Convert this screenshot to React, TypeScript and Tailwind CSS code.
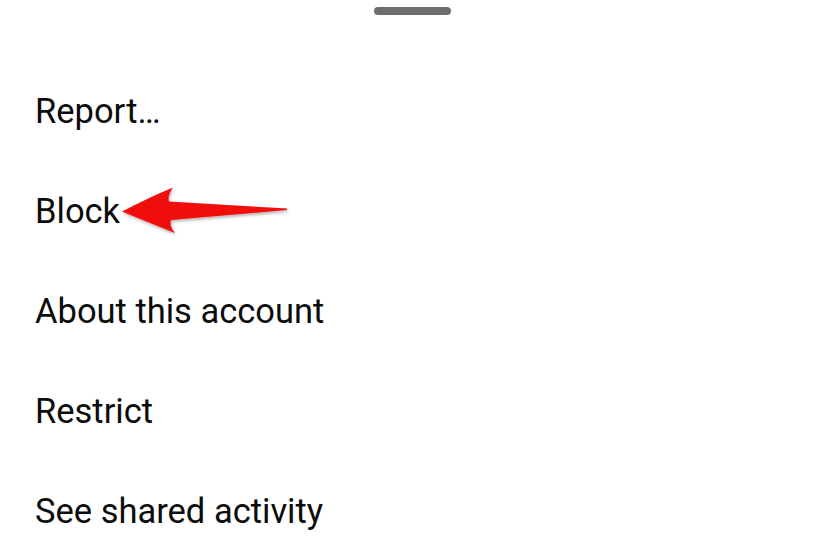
import React from "react";

const items = ["Report…", "Block", "About this account", "Restrict", "See shared activity"];

function PointerArrow() {
  return (
    <svg
      className="absolute left-[110px] top-[20px]"
      width="190"
      height="60"
      viewBox="110 180 190 60"
    >
      <defs>
        <filter id="arrowShadow" x="-10%" y="-30%" width="120%" height="160%">
          <feDropShadow dx="1" dy="2" stdDeviation="1.5" floodColor="#000" floodOpacity="0.3" />
        </filter>
      </defs>
      <path
        d="M122 210.5 Q150 196 173 186.5 Q167 195 169 200.5 L287 207.5 L287 209 L171 219 Q169 225 175 232 Q150 222 122 210.5 Z"
        fill="#f20a0a"
        filter="url(#arrowShadow)"
      />
    </svg>
  );
}

export default function App() {
  return (
    <div
      className="relative w-[825px] h-[549px] overflow-hidden bg-white text-[#0c0c0c]"
      style={{ fontFamily: "Roboto, 'Noto Sans', sans-serif" }}
    >
      <div className="flex justify-center pt-[7px]">
        <div className="w-[77px] h-[8px] rounded-full bg-[#6e6e6e]" />
      </div>
      <div className="flex flex-col pt-[46px]">
        {items.map((label) => (
          <div key={label} className="relative flex items-center h-[100px] pl-[35px]">
            <span className="text-[34.5px] leading-none">{label}</span>
            {label === "Block" && <PointerArrow />}
          </div>
        ))}
      </div>
    </div>
  );
}
